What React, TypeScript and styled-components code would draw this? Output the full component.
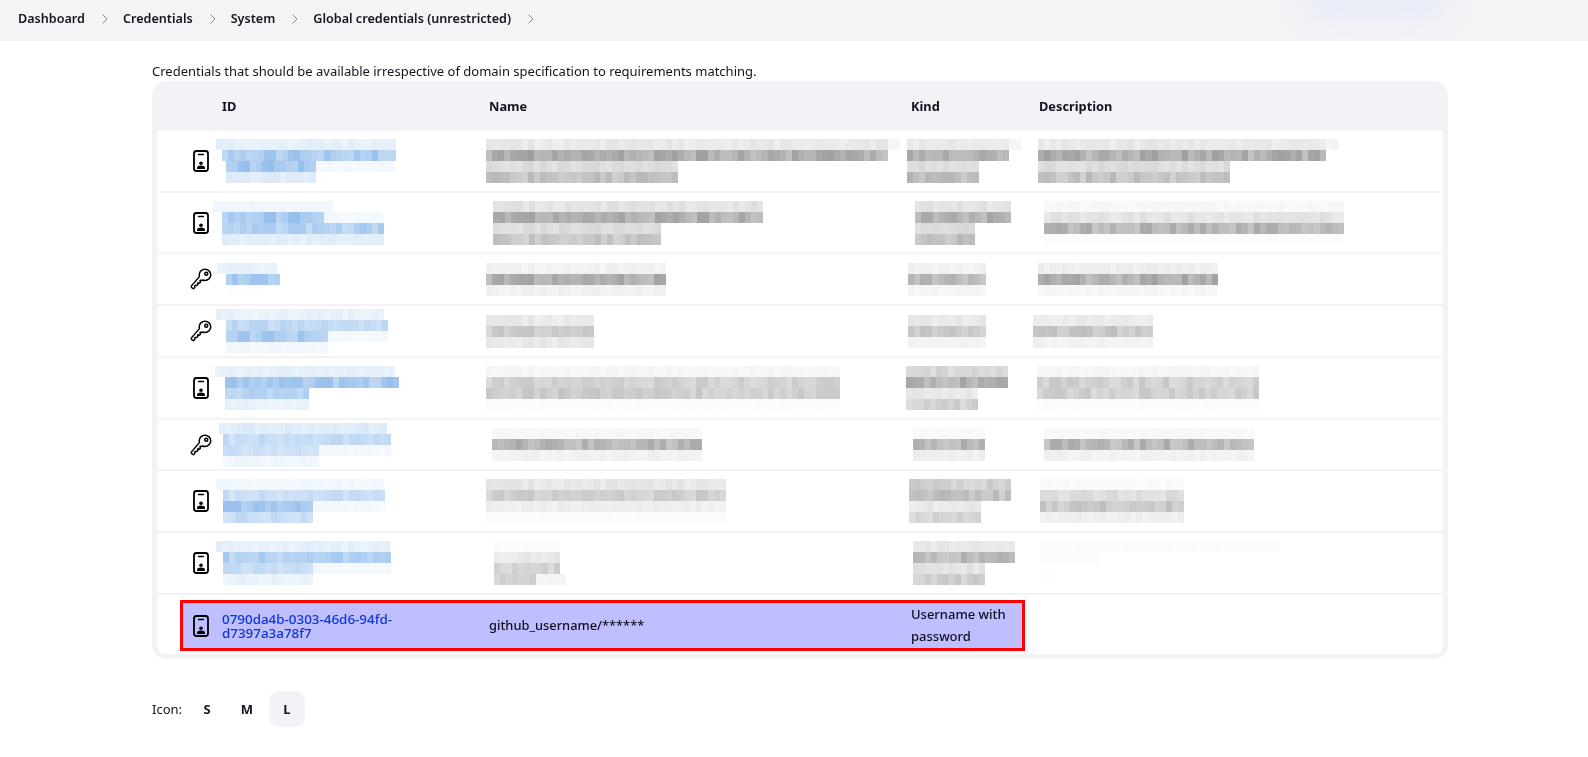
import React from 'react';
import styled, { createGlobalStyle } from 'styled-components';
import { IoKeyOutline } from 'react-icons/io5';

/* [start x on the page, width, strength, pale trail width] */
type Band = [number, number, number, number?];

type Credential = {
    icon: 'card' | 'key',
    lines: 1 | 2,
    id: Band[],
    name: Band[],
    kind: Band[],
    description: Band[],
}

const COLUMN_X = { id: 222, name: 489, kind: 911, description: 1039 };

const credentials: Credential[] = [
    {
        icon: 'card', lines: 2,
        id: [[216, 180, .2], [222, 174, .68], [226, 90, .72, 80], [226, 90, .25]],
        name: [[486, 402, .2, 10], [486, 402, .72], [486, 190, .3], [486, 190, .55]],
        kind: [[907, 101, .2, 10], [907, 101, .72], [907, 71, .3], [907, 71, .6]],
        description: [[1038, 290, .2, 10], [1038, 290, .72], [1038, 190, .3], [1038, 190, .55]],
    },
    {
        icon: 'card', lines: 2,
        id: [[213, 108, .12, 10], [222, 100, .72, 60], [222, 160, .6], [222, 160, .22]],
        name: [[493, 270, .25], [493, 270, .7], [493, 168, .3], [493, 168, .5]],
        kind: [[915, 97, .25], [915, 97, .72], [915, 60, .35], [915, 60, .55]],
        description: [[1044, 300, .07], [1044, 300, .25], [1044, 300, .65], [1044, 300, .03]],
    },
    {
        icon: 'key', lines: 1,
        id: [[217, 60, .2], [226, 51, .68], [228, 30, .03]],
        name: [[486, 182, .12], [486, 182, .7], [486, 182, .12]],
        kind: [[908, 80, .12], [908, 80, .65], [908, 80, .1]],
        description: [[1038, 182, .15], [1038, 182, .7], [1038, 182, .08]],
    },
    {
        icon: 'key', lines: 1,
        id: [[216, 170, .18], [226, 160, .5], [226, 100, .68, 60], [226, 100, .1]],
        name: [[486, 110, .2], [486, 110, .45], [486, 110, .2]],
        kind: [[908, 80, .2], [908, 80, .5], [908, 80, .12]],
        description: [[1033, 118, .18], [1033, 118, .5], [1033, 118, .12]],
    },
    {
        icon: 'card', lines: 2,
        id: [[215, 181, .2], [225, 171, .7], [225, 81, .55], [225, 81, .18]],
        name: [[486, 352, .08], [486, 352, .4], [486, 352, .45], [486, 352, .03]],
        kind: [[906, 100, .35], [906, 100, .7], [906, 69, .2], [906, 69, .4]],
        description: [[1037, 220, .08], [1037, 220, .42], [1037, 220, .42], [1037, 220, .03]],
    },
    {
        icon: 'key', lines: 1,
        id: [[219, 170, .25], [223, 169, .45], [223, 96, .4, 73], [223, 96, .12]],
        name: [[492, 212, .07], [492, 212, .65], [492, 212, .12]],
        kind: [[913, 70, .05], [913, 70, .65], [913, 70, .15]],
        description: [[1044, 210, .06], [1044, 210, .65], [1044, 210, .12]],
    },
    {
        icon: 'card', lines: 2,
        id: [[216, 169, .1], [223, 162, .42], [223, 91, .72, 71], [223, 91, .45]],
        name: [[486, 242, .22], [486, 242, .42], [486, 242, .15], [486, 242, .03]],
        kind: [[909, 101, .42], [909, 101, .55], [909, 70, .2], [909, 70, .38]],
        description: [[1040, 142, .05], [1040, 142, .3], [1040, 142, .5], [1040, 142, .15]],
    },
    {
        icon: 'card', lines: 2,
        id: [[216, 176, .2], [223, 169, .6], [223, 91, .45, 78], [223, 91, .18]],
        name: [[494, 68, .03], [494, 68, .2], [494, 68, .4], [494, 40, .4, 28]],
        kind: [[913, 99, .2], [913, 99, .62], [913, 70, .25], [913, 70, .42]],
        description: [[1040, 238, .03], [1040, 60, .03], [1040, 20, .01], [1040, 20, .01]],
    },
];

const breadcrumbs = ['Dashboard', 'Credentials', 'System', 'Global credentials (unrestricted)'];

function noise(seed: number) {
    const value = Math.sin(seed * 12.9898) * 43758.5453;
    return value - Math.floor(value);
}

function Mosaic({bands, originX, color}: {bands: Band[], originX: number, color: string}) {
    return (
        <MosaicWrapper>
            {bands.map(([start, width, strength, trail = 0], row) => {
                const count = Math.round(width / 6);
                const trailCount = Math.round(trail / 6);
                return (
                    <MosaicBand key={row} style={{marginLeft: start - originX}}>
                        {Array.from({length: count + trailCount}, (_, i) => {
                            const base = i < count ? strength : .09;
                            const amount = base * (.72 + .42 * noise(start + row * 31 + i * 7));
                            return <MosaicCell key={i} $color={color} style={{opacity: Math.min(amount, 1)}} />;
                        })}
                    </MosaicBand>
                );
            })}
        </MosaicWrapper>
    );
}

function CardIcon() {
    return (
        <svg width="18" height="24" viewBox="0 0 18 24" fill="none">
            <rect x="2" y="2" width="14" height="20" rx="2.5" stroke="currentColor" strokeWidth="1.8" />
            <path d="M6.5 5.5h5" stroke="currentColor" strokeWidth="1.4" strokeLinecap="round" />
            <circle cx="9" cy="14.2" r="1.8" fill="currentColor" />
            <path d="M5 20v-1.4c0-1.3 1.6-2.2 4-2.2s4 .9 4 2.2V20z" fill="currentColor" />
        </svg>
    );
}

function RowIcon({icon}: {icon: Credential['icon']}) {
    return (
        <IconCell $key={icon === 'key'}>
            {icon === 'card' ? <CardIcon /> : <IoKeyOutline size={24} />}
        </IconCell>
    );
}

function App() {
    return (
        <>
            <GlobalStyle />
            <TopBar>
                {breadcrumbs.map((crumb) => (
                    <Crumb key={crumb}>
                        <CrumbLabel>{crumb}</CrumbLabel>
                        <Chevron viewBox="0 0 10 12">
                            <path d="M2.5 1.5 7 6l-4.500 4.500" />
                        </Chevron>
                    </Crumb>
                ))}
                <Glow />
            </TopBar>
            <Main>
                <Intro>Credentials that should be available irrespective of domain specification to requirements matching.</Intro>
                <Card>
                    <HeaderRow>
                        <span />
                        <span>ID</span>
                        <span>Name</span>
                        <span>Kind</span>
                        <span>Description</span>
                    </HeaderRow>
                    <Rows>
                        {credentials.map((credential, index) => (
                            <Row key={index} $lines={credential.lines}>
                                <RowIcon icon={credential.icon} />
                                <Mosaic bands={credential.id} originX={COLUMN_X.id} color="#7db0e8" />
                                <Mosaic bands={credential.name} originX={COLUMN_X.name} color="#8a8a8a" />
                                <Mosaic bands={credential.kind} originX={COLUMN_X.kind} color="#8a8a8a" />
                                <Mosaic bands={credential.description} originX={COLUMN_X.description} color="#8a8a8a" />
                            </Row>
                        ))}
                        <LastRow>
                            <RowIcon icon="card" />
                            <IdLink href="#">0790da4b-0303-46d6-94fd-d7397a3a78f7</IdLink>
                            <NameText>github_username/******</NameText>
                            <KindText>Username with password</KindText>
                            <span />
                            <Highlight />
                        </LastRow>
                    </Rows>
                </Card>
                <IconSizes>
                    <IconLabel>Icon:</IconLabel>
                    <SizeButton>S</SizeButton>
                    <SizeButton>M</SizeButton>
                    <SizeButton $active>L</SizeButton>
                </IconSizes>
            </Main>
        </>
    );
}

const GlobalStyle = createGlobalStyle`
    html, body {
        margin: 0;
        background: #fff;
    }

    body {
        font-family: "Noto Sans", "Open Sans", sans-serif;
        font-size: 13px;
        color: #14141f;
    }
`;

const TopBar = styled.nav`
    position: relative;
    box-sizing: border-box;
    height: 41px;
    padding: 0 0 4px 18px;
    display: flex;
    align-items: center;
    background-color: #f4f4f7;
    overflow: hidden;
`;

const Crumb = styled.div`
    display: flex;
    align-items: center;
`;

const CrumbLabel = styled.span`
    font-size: 12.6px;
    font-weight: 600;
`;

const Chevron = styled.svg`
    width: 10px;
    height: 12px;
    margin: 0 13px 0 15px;

    path {
        fill: none;
        stroke: #8b8b93;
        stroke-width: 1;
    }
`;

const Glow = styled.div`
    position: absolute;
    left: 1300px;
    top: -30px;
    width: 150px;
    height: 52px;
    border-radius: 20px;
    background-color: #e8edf7;
    filter: blur(14px);
`;

const Main = styled.main`
    padding: 21px 140px 0 152px;
`;

const Intro = styled.p`
    margin: 0;
    height: 19px;
    line-height: 19px;
`;

const Card = styled.section`
    padding: 0 5px 5px;
    border-radius: 15px;
    background-color: #f2f2f7;
`;

const columns = `
    display: grid;
    grid-template-columns: 65px 267px 422px 128px 1fr;
    align-items: center;
`;

const HeaderRow = styled.div`
    ${columns}
    height: 50px;
    font-size: 12.8px;
    font-weight: 700;
`;

const Rows = styled.div`
    display: flex;
    flex-direction: column;
    gap: 2px;
`;

const Row = styled.div<{$lines: 1 | 2}>`
    ${columns}
    height: ${({$lines}) => ($lines === 2 ? '59.7px' : '49.8px')};
    background-color: #fff;
`;

const LastRow = styled(Row).attrs({$lines: 2})`
    position: relative;
    box-sizing: border-box;
    height: 59px;
    padding-top: 3px;
    border-radius: 0 0 8px 8px;
`;

const IconCell = styled.div<{$key?: boolean}>`
    display: flex;
    justify-content: flex-end;
    align-items: center;
    padding-right: ${({$key}) => ($key ? '9px' : '12px')};
    color: #000;

    svg {
        display: block;
    }
`;

const MosaicWrapper = styled.div`
    display: flex;
    flex-direction: column;
    min-width: 0;
    filter: blur(0.5px);
`;

const MosaicBand = styled.div`
    display: flex;
    height: 11px;
`;

const MosaicCell = styled.i<{$color: string}>`
    flex: none;
    width: 6px;
    background-color: ${({$color}) => $color};
`;

const IdLink = styled.a`
    width: 190px;
    font-size: 13.4px;
    line-height: 14px;
    font-weight: 500;
    color: #1048d8;
    text-decoration: none;
`;

const NameText = styled.span`
    margin-top: -2px;
    font-size: 12.85px;
    font-weight: 500;
`;

const KindText = styled.span`
    width: 110px;
    margin-top: -2px;
    line-height: 22px;
    font-weight: 500;
`;

const Highlight = styled.div`
    position: absolute;
    left: 23px;
    top: 5px;
    width: 845px;
    height: 51px;
    box-sizing: border-box;
    border: 3px solid #f00;
    background-color: #bfbfff;
    mix-blend-mode: multiply;
    pointer-events: none;
`;

const IconSizes = styled.div`
    display: flex;
    align-items: center;
    gap: 4px;
    margin-top: 32px;
`;

const IconLabel = styled.span`
    width: 33px;
`;

const SizeButton = styled.div<{$active?: boolean}>`
    width: 36px;
    height: 36px;
    display: flex;
    align-items: center;
    justify-content: center;
    border-radius: 10px;
    font-size: 13px;
    font-weight: 700;
    background-color: ${({$active}) => ($active ? '#f2f2f7' : 'transparent')};
`;

export default App;
